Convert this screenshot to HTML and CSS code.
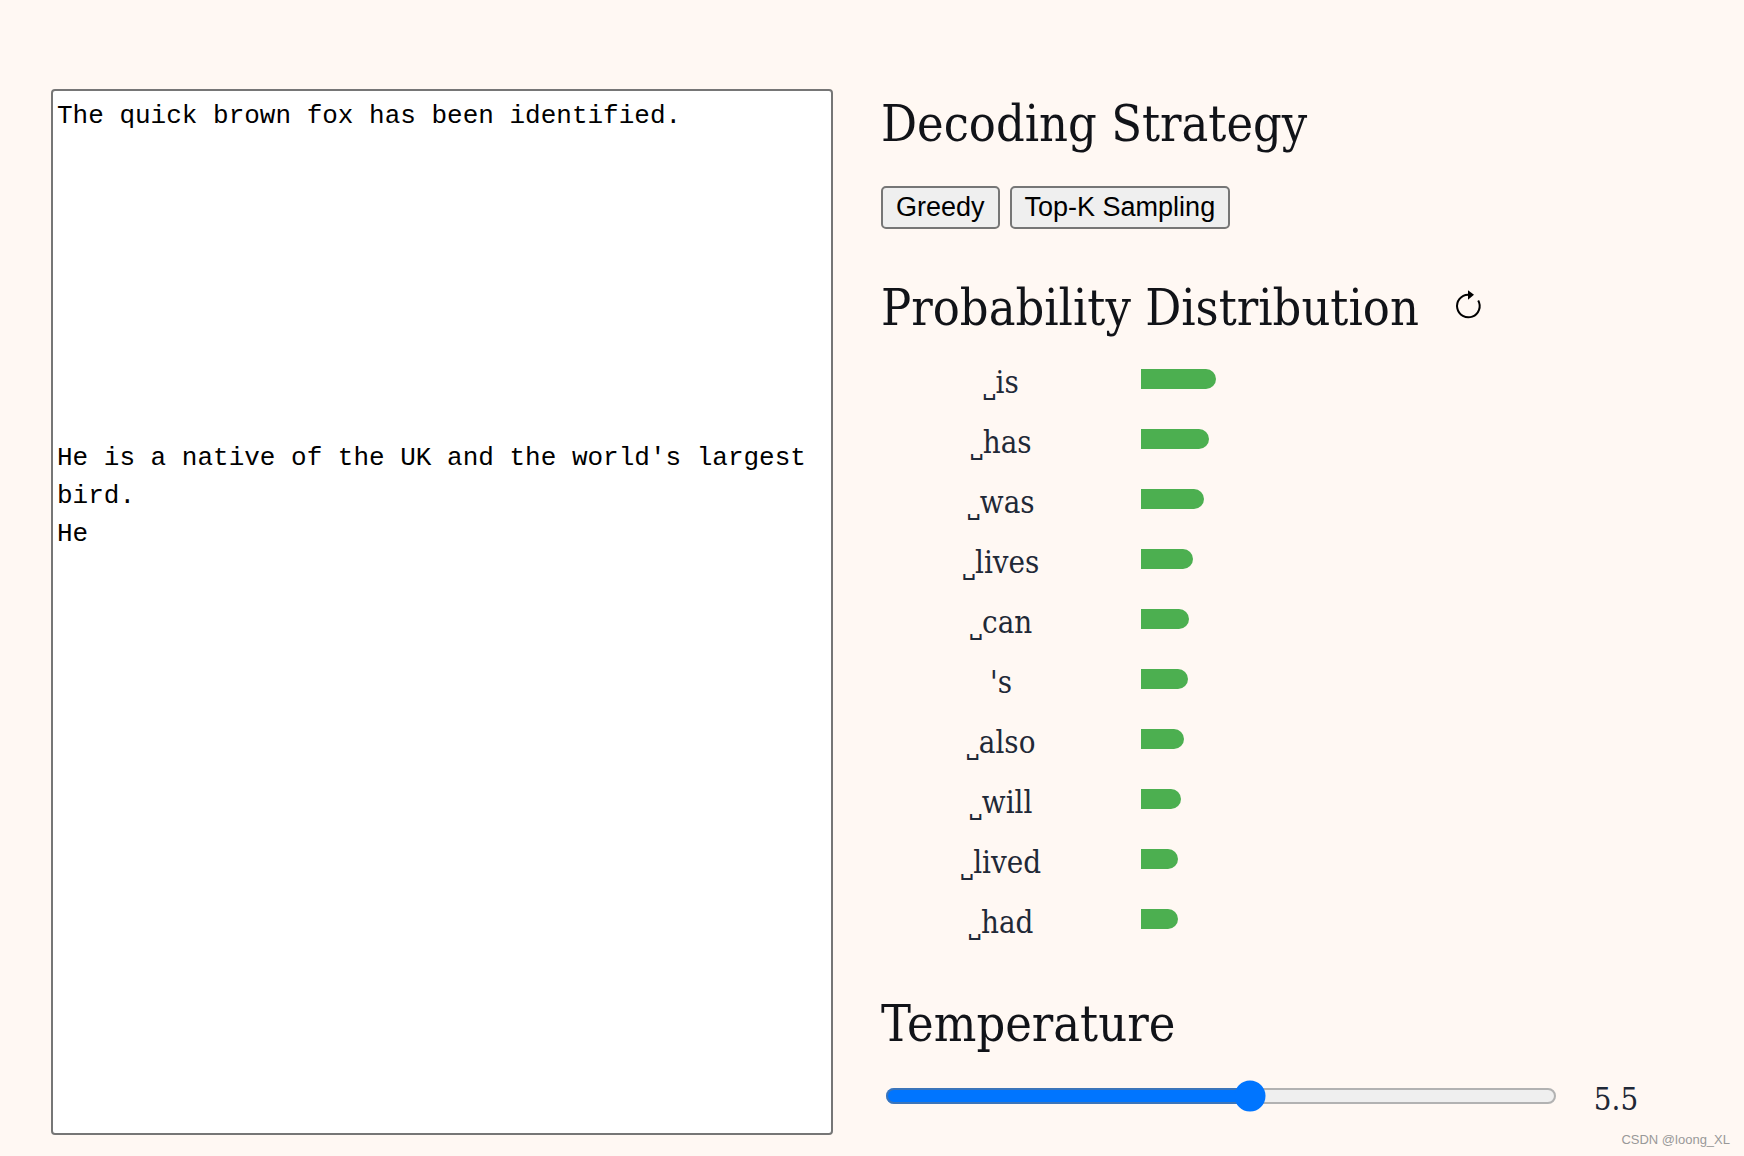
FILE: index.html
```html
<!DOCTYPE html>
<html lang="en">
<head>
  <meta charset="UTF-8">
  <meta name="viewport" content="width=device-width, initial-scale=1.0">
  <title>Decoding Strategy</title>
  <link rel="stylesheet" href="styles.css">
</head>
<body>
  <main class="container">
    <textarea class="editor" aria-label="Generated text" spellcheck="false">The quick brown fox has been identified.








He is a native of the UK and the world's largest bird.
He</textarea>

    <div class="panel">
      <h2>Decoding Strategy</h2>
      <div class="strategies">
        <button type="button">Greedy</button>
        <button type="button">Top-K Sampling</button>
      </div>

      <div class="heading-row">
        <h2>Probability Distribution</h2>
        <button type="button" class="refresh" aria-label="Refresh">
          <svg width="32" height="36" viewBox="0 0 32 36">
            <path d="M16 4.7A11.3 11.3 0 1 0 26.2 10.4" fill="none" stroke="#000" stroke-width="2"/>
            <path d="M16 0.2L22 4.8L16 9.8Z" fill="#000"/>
          </svg>
        </button>
      </div>

      <ul class="tokens">
        <li><span class="token">˽is</span><span class="bar" style="width: 75px"></span></li>
        <li><span class="token">˽has</span><span class="bar" style="width: 68px"></span></li>
        <li><span class="token">˽was</span><span class="bar" style="width: 63px"></span></li>
        <li><span class="token">˽lives</span><span class="bar" style="width: 52px"></span></li>
        <li><span class="token">˽can</span><span class="bar" style="width: 48px"></span></li>
        <li><span class="token">'s</span><span class="bar" style="width: 47px"></span></li>
        <li><span class="token">˽also</span><span class="bar" style="width: 43px"></span></li>
        <li><span class="token">˽will</span><span class="bar" style="width: 40px"></span></li>
        <li><span class="token">˽lived</span><span class="bar" style="width: 37px"></span></li>
        <li><span class="token">˽had</span><span class="bar" style="width: 37px"></span></li>
      </ul>

      <h2><label for="temperature">Temperature</label></h2>
      <div class="slider-row">
        <input type="range" id="temperature" min="0.1" max="10" step="0.1" value="5.5">
        <output for="temperature" id="temperatureValue">5.5</output>
      </div>
    </div>
  </main>

  <div class="watermark">CSDN @loong_XL</div>

  <script>
    const slider = document.querySelector('#temperature');
    slider.addEventListener('input', () => {
      document.querySelector('#temperatureValue').textContent = slider.value;
    });
  </script>
</body>
</html>
```
FILE: styles.css
```css
* {
  box-sizing: border-box;
}
body {
  margin: 0;
  background: #fff8f3;
  color: #1f2937;
  font-family: "DejaVu Serif Condensed", "DejaVu Serif", serif;
  font-size: 31px;
}
.container {
  display: grid;
  grid-template-columns: 1fr 1fr;
  gap: 48px;
  min-height: 100vh;
  padding: 89px 81px 21px 51px;
}
.editor {
  width: 100%;
  padding: 6px 4px;
  border: 2px solid #767676;
  border-radius: 4px;
  background: #fff;
  color: #000;
  font-family: "Liberation Mono", monospace;
  font-size: 26px;
  line-height: 38px;
  resize: none;
}
.panel {
  padding-top: 4px;
}
h2 {
  margin: 0;
  color: #111318;
  font-size: 50px;
  font-weight: normal;
  line-height: 62px;
}
.strategies {
  display: flex;
  gap: 10px;
  margin: 31px 0 48px;
}
.strategies button {
  padding: 4px 13px;
  border: 2px solid #767676;
  border-radius: 5px;
  background: #efefef;
  color: #000;
  font-family: "Liberation Sans", Arial, sans-serif;
  font-size: 27px;
  line-height: 31px;
}
.heading-row {
  display: flex;
  align-items: center;
  gap: 33px;
}
.refresh {
  padding: 0;
  border: 0;
  background: none;
  cursor: pointer;
}
.refresh svg {
  display: block;
}
.tokens {
  list-style: none;
  margin: 16px 0 38px;
  padding: 0;
}
.tokens li {
  display: flex;
  gap: 20px;
  height: 60px;
}
.token {
  width: 240px;
  line-height: 54px;
  text-align: center;
}
.bar {
  height: 20px;
  margin-top: 14px;
  border-radius: 0 10px 10px 0;
  background: #4caf50;
}
.slider-row {
  display: flex;
  align-items: flex-start;
  gap: 8px;
  margin-top: 17px;
}
.slider-row input {
  flex: 1;
  margin: 4px 2px;
  zoom: 2;
}
.slider-row output {
  width: 94px;
  line-height: 54px;
  text-align: center;
}
.watermark {
  position: absolute;
  right: 14px;
  bottom: 8px;
  color: #999;
  font-family: "Liberation Sans", Arial, sans-serif;
  font-size: 13px;
  line-height: 16px;
}
```
